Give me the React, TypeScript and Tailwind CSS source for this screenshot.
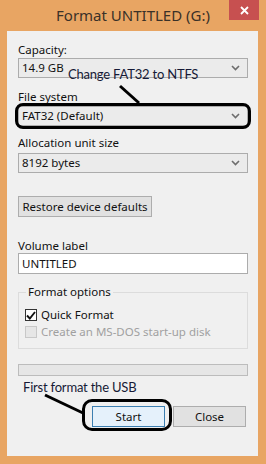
import React from "react";

const ui = { fontFamily: '"Noto Sans", "Open Sans", sans-serif' };
const hand = { fontFamily: 'Lato, "Open Sans", sans-serif' };

function Chevron() {
  return (
    <svg width="9" height="6" viewBox="0 0 9 6" className="shrink-0">
      <path d="M1 1l3.5 3.5L8 1" fill="none" stroke="#6d6d6d" strokeWidth="1.6" />
    </svg>
  );
}

function Select({ value }: { value: string }) {
  return (
    <div className="h-[20px] w-[230px] flex items-center justify-between border border-[#acacac] bg-[#ebebeb] pl-[3px] pr-[7px] text-[11.5px] text-[#111]">
      <span>{value}</span>
      <Chevron />
    </div>
  );
}

function Label({ text, className = "" }: { text: string; className?: string }) {
  return <div className={`h-[15px] leading-[15px] text-[11.5px] text-[#111] ${className}`}>{text}</div>;
}

export default function App() {
  return (
    <div className="relative w-[266px] h-[464px] bg-[#e8a563] overflow-hidden" style={ui}>
      {/* Title bar */}
      <div className="h-[31px] flex items-center justify-center pb-[1px]">
        <span className="text-[15px] text-[#3a3128]">Format UNTITLED (G:)</span>
      </div>
      <div className="absolute top-0 right-[7px] w-[30px] h-[20px] bg-[#c75050] flex items-center justify-center">
        <svg width="9" height="9" viewBox="0 0 9 9">
          <path d="M1 1l7 7M8 1L1 8" stroke="#fff" strokeWidth="1.8" />
        </svg>
      </div>

      {/* Dialog body */}
      <div className="ml-[7px] mr-[8px] h-[425px] bg-[#f0f0f0] pl-[11px] flex flex-col">
        <Label text="Capacity:" className="mt-[11px]" />
        <div className="mt-[1px]">
          <Select value="14.9 GB" />
        </div>
        <Label text="File system" className="mt-[11px]" />
        <div className="mt-[2px]">
          <Select value="FAT32 (Default)" />
        </div>
        <Label text="Allocation unit size" className="mt-[9px]" />
        <div className="mt-[3px]">
          <Select value="8192 bytes" />
        </div>
        <div className="mt-[23px] h-[21px] w-[134px] border border-[#adadad] bg-[#e1e1e1] flex items-center justify-center text-[11.5px] text-[#111]">
          Restore device defaults
        </div>
        <div className="mt-[22px] h-[14px] leading-[14px] text-[11.5px] text-[#111]">Volume label</div>
        <div className="h-[21px] w-[230px] border border-[#acacac] bg-white pl-[3px] flex items-center text-[11.5px] text-[#111]">
          UNTITLED
        </div>

        {/* Format options group */}
        <div className="relative mt-[18px] h-[57px] w-[230px] border border-[#dcdcdc] pt-[16px] pl-[6px] flex flex-col gap-[5px]">
          <span className="absolute -top-[9px] left-[7px] px-[2px] bg-[#f0f0f0] text-[11.5px] leading-[15px] text-[#111]">
            Format options
          </span>
          <div className="h-[12px] flex items-center gap-[4px] text-[11.5px] text-[#111]">
            <div className="w-[12px] h-[12px] border border-[#333] bg-white flex items-center justify-center">
              <svg width="10" height="9" viewBox="0 0 10 9">
                <path d="M1 4.5l2.8 3L9 1" fill="none" stroke="#111" strokeWidth="1.9" />
              </svg>
            </div>
            <span>Quick Format</span>
          </div>
          <div className="h-[12px] flex items-center gap-[4px] text-[11.5px] text-[#a0a0a0]">
            <div className="w-[12px] h-[12px] border border-[#c8c8c8] bg-[#e6e6e6]" />
            <span>Create an MS-DOS start-up disk</span>
          </div>
        </div>

        {/* Progress bar */}
        <div className="mt-[15px] h-[12px] w-[230px] border border-[#bcbcbc] bg-[#e6e6e6]" />

        {/* Buttons */}
        <div className="mt-[30px] w-[230px] flex justify-end gap-[8px] pr-[2px]">
          <div className="h-[21px] w-[73px] border border-[#3c7fb1] bg-[#e5f1fb] flex items-center justify-center text-[11.5px] text-[#111]">
            Start
          </div>
          <div className="h-[21px] w-[73px] border border-[#adadad] bg-[#e1e1e1] flex items-center justify-center text-[11.5px] text-[#111]">
            Close
          </div>
        </div>
      </div>

      {/* Annotations */}
      <span className="absolute left-[68px] top-[65px] text-[13px] tracking-[-0.2px] leading-[18px] text-[#161a36]" style={hand}>
        Change FAT32 to NTFS
      </span>
      <div className="absolute left-[15px] top-[103px] w-[236px] h-[26px] rounded-[8px] border-[3px] border-black" />
      <span className="absolute left-[23px] top-[378px] text-[13px] tracking-[-0.2px] leading-[18px] text-[#161a36]" style={hand}>
        First format the USB
      </span>
      <div className="absolute left-[82px] top-[399px] w-[90px] h-[32px] rounded-[10px] border-[3px] border-black" />
      <svg className="absolute left-0 top-0 pointer-events-none" width="266" height="464">
        <path d="M120 86L139 103" stroke="#000" strokeWidth="3" />
        <path d="M45 395L83 413" stroke="#000" strokeWidth="3" />
      </svg>
    </div>
  );
}
